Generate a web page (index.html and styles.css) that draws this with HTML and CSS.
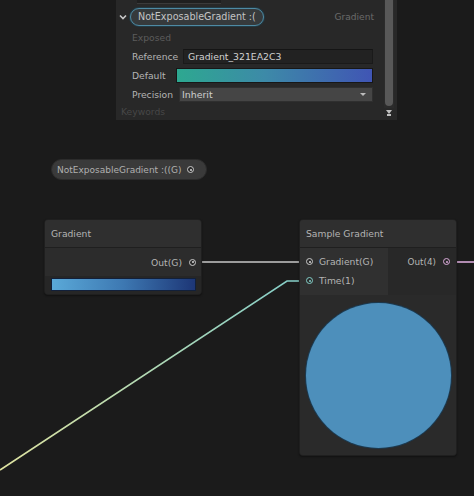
FILE: index.html
```
<!DOCTYPE html>
<html>
<head>
<meta charset="utf-8">
<link rel="stylesheet" href="styles.css">
</head>
<body>
<div class="canvas">
  <svg class="edges" width="474" height="496" viewBox="0 0 474 496">
    <defs>
      <linearGradient id="timeEdge" gradientUnits="userSpaceOnUse" x1="290" y1="281" x2="0" y2="470">
        <stop offset="0" stop-color="#86cfc8"/>
        <stop offset="1" stop-color="#dfe3a0"/>
      </linearGradient>
    </defs>
    <line x1="197" y1="262" x2="305" y2="262" stroke="#c9c9c9" stroke-width="1.6"/>
    <polyline points="305,281 287,281 0,470" fill="none" stroke="url(#timeEdge)" stroke-width="1.6"/>
    <line x1="451" y1="262" x2="474" y2="262" stroke="#d9aad9" stroke-width="1.6"/>
  </svg>

  <div class="blackboard">
    <div class="stub"></div>
    <div class="prop-head">
      <svg class="chev" width="14" height="10" viewBox="0 0 14 10"><path d="M4 3.5 L7 6.5 L10 3.5" fill="none" stroke="#c8c8c8" stroke-width="1.6"/></svg>
      <span class="prop-pill">NotExposableGradient :(</span>
      <span class="prop-type">Gradient</span>
    </div>
    <div class="prop-body">
      <div class="row"><span class="lbl dim">Exposed</span></div>
      <div class="row"><span class="lbl">Reference</span><span class="field text-field">Gradient_321EA2C3</span></div>
      <div class="row"><span class="lbl">Default</span><span class="field grad-field"></span></div>
      <div class="row"><span class="lbl">Precision</span><span class="field drop-field"><span>Inherit</span><span class="drop-arrow"></span></span></div>
    </div>
    <div class="keywords">Keywords</div>
    <div class="scrollbar"><div class="thumb"></div></div>
    <div class="scroll-arrow"></div>
  </div>

  <div class="prop-node">
    <span>NotExposableGradient :((G)</span>
    <span class="port port-gray"></span>
  </div>

  <div class="node node-gradient">
    <div class="node-title">Gradient</div>
    <div class="node-ports single">
      <div class="out-row"><span>Out(G)</span><span class="port port-gray"></span></div>
    </div>
    <div class="node-gradbar"><div class="bar"></div></div>
  </div>

  <div class="node node-sample">
    <div class="node-title">Sample Gradient</div>
    <div class="node-ports split">
      <div class="inputs">
        <div class="in-row"><span class="port port-gray"></span><span>Gradient(G)</span></div>
        <div class="in-row"><span class="port port-teal"></span><span>Time(1)</span></div>
      </div>
      <div class="outputs">
        <div class="out-row"><span>Out(4)</span><span class="port port-pink"></span></div>
      </div>
    </div>
    <div class="node-preview"><div class="circle"></div></div>
  </div>
</div>
</body>
</html>
```
FILE: styles.css
```
html, body {
  margin: 0;
  padding: 0;
  background: #1b1b1b;
}
.canvas {
  position: relative;
  width: 474px;
  height: 496px;
  overflow: hidden;
  background: #1b1b1b;
  font-family: "DejaVu Sans", Verdana, sans-serif;
  font-size: 9.2px;
  color: #b9b9b9;
  white-space: nowrap;
}
.edges {
  position: absolute;
  left: 0;
  top: 0;
}

/* Blackboard */
.blackboard {
  position: absolute;
  left: 116px;
  top: 0;
  width: 281px;
  height: 120px;
  background: #282828;
  box-sizing: border-box;
}
.stub {
  position: absolute;
  left: 21px;
  top: 0;
  width: 84px;
  height: 3px;
  background: #1f1f1f;
  border-bottom: 1px solid #3a3a3a;
}
.prop-head {
  position: absolute;
  left: 0;
  top: 8px;
  width: 258px;
  height: 18px;
  display: flex;
  align-items: center;
}
.chev {
  flex: 0 0 auto;
}
.prop-pill {
  height: 16px;
  line-height: 16px;
  padding: 0 7px 0 7px;
  border: 1px solid #4f8aa3;
  border-radius: 9px;
  background: #363a3c;
  box-shadow: 0 0 0 1px #223a44;
  color: #c4c4c4;
  font-size: 9.6px;
}
.prop-type {
  margin-left: auto;
  color: #6a6a6a;
  font-size: 9.1px;
}
.prop-body {
  position: absolute;
  left: 16px;
  top: 28px;
  width: 241px;
  display: flex;
  flex-direction: column;
}
.row {
  height: 19px;
  display: flex;
  align-items: center;
}
.lbl {
  color: #b4b4b4;
  font-size: 9.2px;
  flex: 1 0 auto;
}
.lbl.dim {
  color: #5c5c5c;
}
.field {
  box-sizing: border-box;
  height: 15px;
}
.text-field {
  width: 190px;
  background: #222222;
  border: 1px solid #1a1a1a;
  border-top-color: #151515;
  color: #d2d2d2;
  padding-left: 4px;
  line-height: 13px;
  font-size: 9.3px;
}
.grad-field {
  width: 197px;
  border: 1px solid #171717;
  background: linear-gradient(to right, #2da890, #3d8aa8 45%, #4055b4);
}
.drop-field {
  width: 194px;
  background: #454545;
  border: 1px solid #2f2f2f;
  color: #cfcfcf;
  padding-left: 2px;
  line-height: 13px;
  font-size: 9.4px;
  display: flex;
  align-items: center;
}
.drop-arrow {
  margin-left: auto;
  margin-right: 6px;
  width: 0;
  height: 0;
  border-left: 3px solid transparent;
  border-right: 3px solid transparent;
  border-top: 3px solid #bcbcbc;
}
.keywords {
  position: absolute;
  left: 5px;
  top: 106px;
  color: #474747;
  font-size: 9.2px;
}
.scrollbar {
  position: absolute;
  left: 268px;
  top: 0;
  width: 10px;
  height: 108px;
  background: #2b2b2b;
}
.thumb {
  margin: 0 auto;
  width: 8px;
  height: 106px;
  background: #585858;
  border-radius: 0 0 4px 4px;
}
.scroll-arrow {
  position: absolute;
  left: 270px;
  top: 110px;
  width: 0;
  height: 0;
  border-left: 3px solid transparent;
  border-right: 3px solid transparent;
  border-top: 4px solid #c0c0c0;
  box-shadow: 0 3px 0 -1px #c0c0c0;
}

/* Property node */
.prop-node {
  position: absolute;
  left: 51px;
  top: 159px;
  width: 156px;
  height: 21px;
  box-sizing: border-box;
  border-radius: 11px;
  background: #3a3a3a;
  border: 1px solid #2c2c2c;
  display: flex;
  align-items: center;
  padding-left: 5px;
  color: #b0b0b0;
  font-size: 9px;
}
.prop-node .port {
  margin-left: auto;
  margin-right: 12px;
}

/* Ports */
.port {
  box-sizing: border-box;
  width: 7px;
  height: 7px;
  border-radius: 50%;
  flex: 0 0 auto;
  position: relative;
}
.port::after {
  content: "";
  position: absolute;
  left: 1.5px;
  top: 1.5px;
  width: 2px;
  height: 2px;
  border-radius: 50%;
}
.port-gray { border: 1.2px solid #c9c9c9; background: #2a2a2a; }
.port-gray::after { background: #d8d8d8; }
.port-teal { border: 1.2px solid #84cfc8; background: #2a2a2a; }
.port-teal::after { background: #84cfc8; }
.port-pink { border: 1.2px solid #d9aad9; background: #2a2a2a; }
.port-pink::after { background: #d9aad9; }

/* Nodes */
.node {
  position: absolute;
  width: 158px;
  box-sizing: border-box;
  border-radius: 4px;
  background: #2a2a2a;
  border: 1px solid #1f1f1f;
  overflow: hidden;
  box-shadow: 0 1px 2px rgba(0,0,0,0.4);
}
.node-gradient { left: 44px; top: 219px; height: 76px; }
.node-sample { left: 299px; top: 219px; height: 237px; }
.node-title {
  height: 27px;
  line-height: 27px;
  padding-left: 6px;
  background: #2f2f2f;
  border-bottom: 1px solid #1f1f1f;
  color: #b4b4b4;
  font-size: 9.2px;
}
.node-ports.single {
  height: 28px;
  background: #2c2c2c;
  display: flex;
  align-items: center;
  justify-content: flex-end;
}
.out-row {
  display: flex;
  align-items: center;
  gap: 7px;
  padding-right: 5px;
  color: #b4b4b4;
  font-size: 9.2px;
  height: 19px;
}
.node-gradbar {
  height: 19px;
  background: #262626;
  padding: 2px 5px 0 6px;
  box-sizing: border-box;
}
.bar {
  height: 13px;
  box-sizing: border-box;
  border: 1px solid #12203a;
  background: linear-gradient(to right, #5aa9d8, #3d78b2 50%, #1d3676);
}
.node-ports.split {
  height: 47px;
  display: flex;
}
.inputs {
  width: 88px;
  background: #303030;
  padding-top: 4px;
  box-sizing: border-box;
}
.outputs {
  flex: 1;
  background: #282828;
  padding-top: 4px;
  display: flex;
  flex-direction: column;
  align-items: flex-end;
}
.outputs .out-row { padding-right: 6px; gap: 7px; font-size: 8.8px; }
.in-row {
  height: 19px;
  display: flex;
  align-items: center;
  gap: 6px;
  padding-left: 6px;
  color: #b4b4b4;
  font-size: 9.2px;
}
.node-preview {
  height: 160px;
  background: #2a2a2a;
  display: flex;
  align-items: center;
  justify-content: center;
}
.circle {
  width: 145px;
  height: 145px;
  border-radius: 50%;
  background: #4d8fbb;
  box-shadow: 0 0 0 1px #1c3a50;
}
```
